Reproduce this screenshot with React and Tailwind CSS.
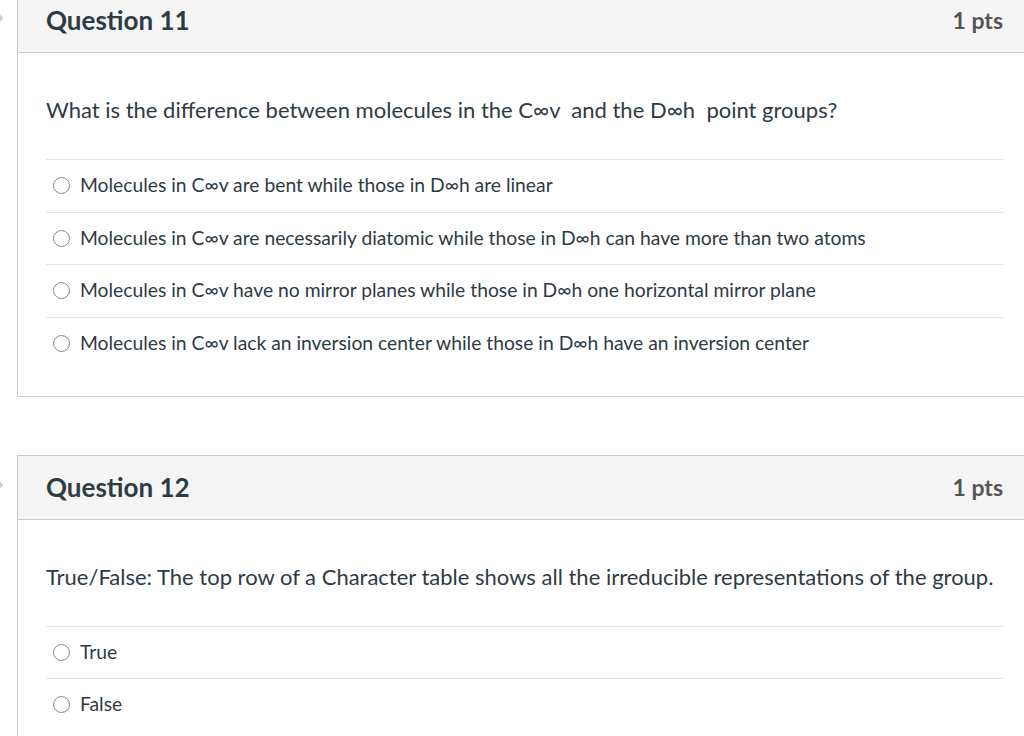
const questions = [
  {
    number: 11,
    points: '1 pts',
    text: 'What is the difference between molecules in the C\u221Ev\u00A0 and the D\u221Eh\u00A0 point groups?',
    answers: [
      'Molecules in C\u221Ev are bent while those in D\u221Eh are linear',
      'Molecules in C\u221Ev are necessarily diatomic while those in D\u221Eh can have more than two atoms',
      'Molecules in C\u221Ev have no mirror planes while those in D\u221Eh one horizontal mirror plane',
      'Molecules in C\u221Ev lack an inversion center while those in D\u221Eh have an inversion center',
    ],
  },
  {
    number: 12,
    points: '1 pts',
    text: 'True/False: The top row of a Character table shows all the irreducible representations of the group.',
    answers: ['True', 'False'],
  },
];

const Marker = () => (
  <svg className="absolute left-[-9px] top-[22px]" width="14" height="16" viewBox="0 0 14 16" fill="none">
    <path d="M5 2 L11 8 L5 14" stroke="#c3d1de" strokeWidth="2.2" strokeLinecap="round" strokeLinejoin="round" />
  </svg>
);

const Question = ({ q }) => (
  <div className="flex">
    <div className="relative w-[17px] shrink-0">
      <Marker />
    </div>
    <div className="w-[1015px] shrink-0 border border-[#c7cdd1] bg-white">
      <div className="flex h-[64px] items-center justify-between border-b border-[#c7cdd1] bg-[#f5f5f5] px-[28px]">
        <h2 className="text-[26px] font-bold text-[#2d3b45]">Question {q.number}</h2>
        <span className="text-[23px] font-bold text-[#555555]">{q.points}</span>
      </div>
      <div className="px-[28px] pt-[43px] pb-[26px]">
        <p className="text-[22px] leading-[28px] text-[#2d3b45]">{q.text}</p>
        <div className="mt-[35px]">
          {q.answers.map(a => (
            <label key={a} className="flex h-[52.7px] items-center gap-[10px] border-t border-[#e4e4e4] pb-[1px] pl-[7px]">
              <span className="h-[17px] w-[17px] shrink-0 rounded-full border border-[#888888] bg-white" />
              <span className="text-[19.3px] text-[#2d3b45]">{a}</span>
            </label>
          ))}
        </div>
      </div>
    </div>
  </div>
);

export default function App() {
  return (
    <div className="h-[736px] w-[1024px] overflow-hidden bg-white font-['Lato','Noto_Sans',sans-serif]">
      <div className="mt-[-12px] flex flex-col gap-[58px]">
        {questions.map(q => (
          <Question key={q.number} q={q} />
        ))}
      </div>
    </div>
  );
}
